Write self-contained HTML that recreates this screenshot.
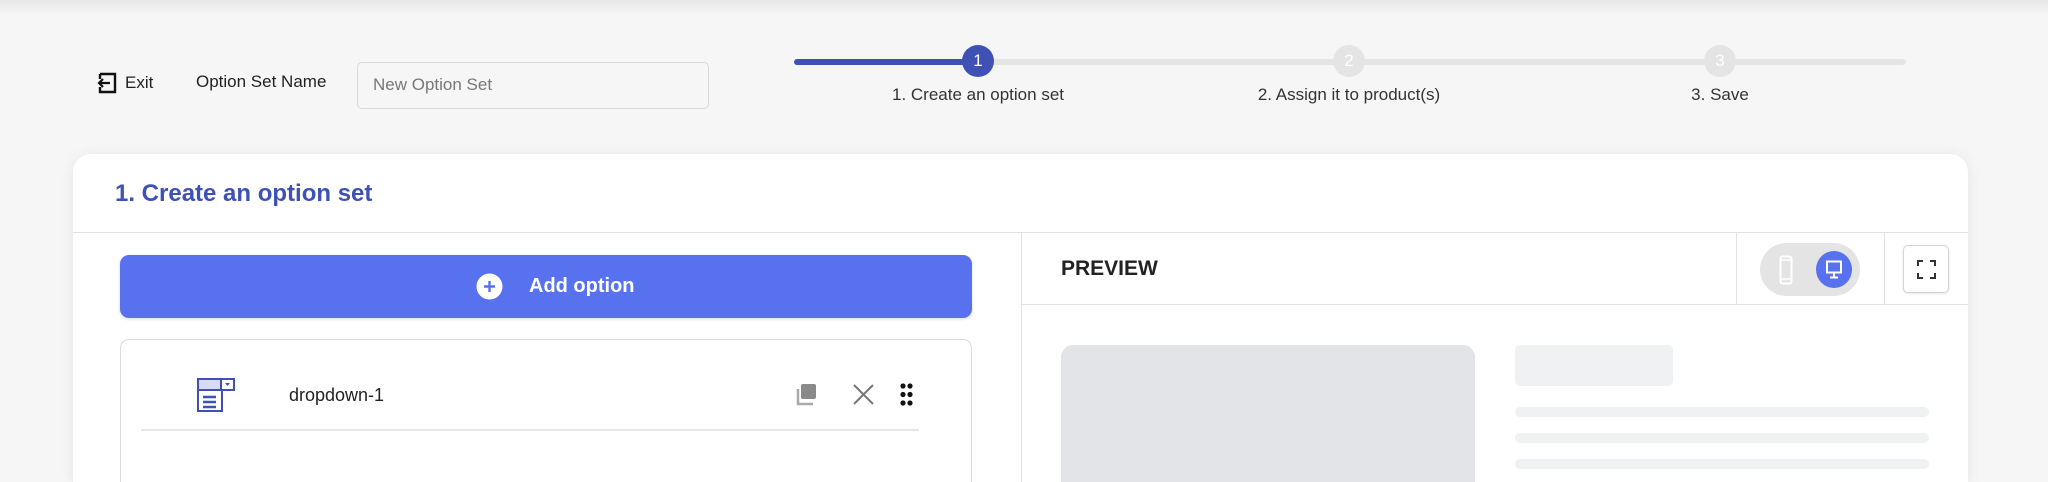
<!DOCTYPE html>
<html><head><meta charset="utf-8"><style>
*{box-sizing:border-box;margin:0;padding:0}
html,body{width:2048px;height:482px;overflow:hidden}
body{background:#f6f6f6;font-family:"Liberation Sans",sans-serif;position:relative;color:#222}
.a{position:absolute}
.topsh{left:0;top:0;width:2048px;height:16px;background:linear-gradient(#e6e6e6,#f6f6f6)}
.circ{width:32px;height:32px;border-radius:50%;text-align:center;line-height:32px;font-size:17px;color:#fff}
.lbl{font-size:17px;color:#333;transform:translateX(-50%);white-space:nowrap;top:85px}
.card{left:73px;top:154px;width:1895px;height:328px;background:#fff;border-radius:18px 18px 0 0;box-shadow:0 2px 14px rgba(0,0,0,.08);overflow:hidden}
.sk{background:#f0f1f3;border-radius:5px}
</style></head><body>
<div class="a topsh"></div>
<svg class="a" style="left:96px;top:72px" width="22" height="22" viewBox="0 0 22 22"><path d="M4 2h15v18H4v-5M4 7V2" fill="none" stroke="#111" stroke-width="2.4"/><path d="M14 11H3M7 7l-4 4 4 4" fill="none" stroke="#111" stroke-width="2.2"/></svg>
<div class="a" style="left:125px;top:73px;font-size:17px">Exit</div>
<div class="a" style="left:196px;top:72px;font-size:17px">Option Set Name</div>
<div class="a" style="left:357px;top:62px;width:352px;height:47px;border:1px solid #d8d8d8;border-radius:5px;background:#f6f6f6;font-size:17px;color:#777;padding:12px 15px">New Option Set</div>
<div class="a" style="left:794px;top:59px;width:1112px;height:6px;background:#e4e4e4;border-radius:3px"></div>
<div class="a" style="left:794px;top:59px;width:184px;height:6px;background:#3f51b5;border-radius:3px"></div>
<div class="a circ" style="left:962px;top:45px;background:#3f51b5">1</div>
<div class="a circ" style="left:1333px;top:45px;background:#e4e4e4">2</div>
<div class="a circ" style="left:1704px;top:45px;background:#e4e4e4">3</div>
<div class="a lbl" style="left:978px">1. Create an option set</div>
<div class="a lbl" style="left:1349px">2. Assign it to product(s)</div>
<div class="a lbl" style="left:1720px">3. Save</div>
<div class="a card">
 <div class="a" style="left:42px;top:26px;font-size:24px;font-weight:bold;color:#3f51b5">1. Create an option set</div>
 <div class="a" style="left:0;top:78px;width:1895px;height:1px;background:#e2e2e2"></div>
 <div class="a" style="left:948px;top:79px;width:1px;height:260px;background:#e2e2e2"></div>
 <div class="a" style="left:47px;top:101px;width:852px;height:63px;background:#5871ee;border-radius:9px;box-shadow:0 1px 3px rgba(0,0,0,.15)"></div>
 <svg class="a" style="left:403px;top:119px" width="27" height="27" viewBox="0 0 27 27"><circle cx="13.5" cy="13.5" r="13" fill="#fff"/><path d="M13.5 8v11M8 13.5h11" stroke="#5871ee" stroke-width="2.4"/></svg>
 <div class="a" style="left:456px;top:121px;font-size:20px;color:#fff;font-weight:bold">Add option</div>
 <div class="a" style="left:47px;top:185px;width:852px;height:200px;border:1px solid #dcdcdc;border-radius:9px"></div>
 <svg class="a" style="left:124px;top:224px" width="38" height="34" viewBox="0 0 38 34"><rect x="1" y="1" width="24" height="32" fill="#fff" stroke="#3f51b5" stroke-width="2"/><rect x="2" y="2" width="22" height="10" fill="#d8dcf3"/><path d="M1 12h24" stroke="#3f51b5" stroke-width="2"/><rect x="24" y="1" width="13" height="11" fill="#fff" stroke="#3f51b5" stroke-width="2"/><path d="M28 5l2.5 3 2.5-3z" fill="#3f51b5"/><path d="M6 19h13M6 24h13M6 29h13" stroke="#3f51b5" stroke-width="2.4"/></svg>
 <div class="a" style="left:216px;top:231px;font-size:18px;color:#222">dropdown-1</div>
 <svg class="a" style="left:721px;top:229px" width="23" height="23" viewBox="0 0 23 23"><rect x="7" y="1" width="15" height="15" rx="2" fill="#8a8a8a"/><path d="M4 6v15h15" fill="none" stroke="#aaa" stroke-width="2.5"/></svg>
 <svg class="a" style="left:779px;top:229px" width="23" height="23" viewBox="0 0 23 23"><path d="M2 2l19 19M21 2L2 21" stroke="#777" stroke-width="2"/></svg>
 <svg class="a" style="left:827px;top:229px" width="13" height="23" viewBox="0 0 13 23"><g fill="#111"><circle cx="3" cy="3" r="2.6"/><circle cx="10" cy="3" r="2.6"/><circle cx="3" cy="11.5" r="2.6"/><circle cx="10" cy="11.5" r="2.6"/><circle cx="3" cy="20" r="2.6"/><circle cx="10" cy="20" r="2.6"/></g></svg>
 <div class="a" style="left:68px;top:275px;width:778px;height:2px;background:#e6e6e6"></div>
 <div class="a" style="left:949px;top:150px;width:946px;height:1px;background:#e2e2e2"></div>
 <div class="a" style="left:988px;top:103px;font-size:21px;font-weight:bold;color:#222">PREVIEW</div>
 <div class="a" style="left:1663px;top:79px;width:1px;height:71px;background:#e2e2e2"></div>
 <div class="a" style="left:1811px;top:79px;width:1px;height:71px;background:#e2e2e2"></div>
 <div class="a" style="left:1687px;top:89px;width:100px;height:53px;border-radius:27px;background:#e4e4e4"></div>
 <svg class="a" style="left:1706px;top:101px" width="14" height="30" viewBox="0 0 14 30"><rect x="1.5" y="1.5" width="11" height="27" rx="2" fill="none" stroke="#fff" stroke-width="2"/><path d="M2 5h10M2 24h10" stroke="#fff" stroke-width="1.5"/></svg>
 <div class="a" style="left:1743px;top:97px;width:36px;height:37px;border-radius:50%;background:#5871ee"></div>
 <svg class="a" style="left:1752px;top:106px" width="18" height="19" viewBox="0 0 18 19"><rect x="2" y="1.5" width="14" height="11" fill="none" stroke="#fff" stroke-width="2"/><path d="M9 13v4M5 17.5h8" stroke="#fff" stroke-width="2"/></svg>
 <div class="a" style="left:1830px;top:91px;width:46px;height:48px;border:1px solid #d4d4d4;border-radius:5px;background:#fff;box-shadow:0 1px 2px rgba(0,0,0,.1)"></div>
 <svg class="a" style="left:1844px;top:106px" width="19" height="19" viewBox="0 0 19 19"><path d="M1 6V1h5M13 1h5v5M18 13v5h-5M6 18H1v-5" fill="none" stroke="#333" stroke-width="2"/></svg>
 <div class="a" style="left:988px;top:191px;width:414px;height:160px;background:#e3e4e8;border-radius:12px 12px 0 0"></div>
 <div class="a sk" style="left:1442px;top:191px;width:158px;height:41px"></div>
 <div class="a sk" style="left:1442px;top:253px;width:414px;height:10px"></div>
 <div class="a sk" style="left:1442px;top:279px;width:414px;height:10px"></div>
 <div class="a sk" style="left:1442px;top:305px;width:414px;height:10px"></div>
</div>
</body></html>
